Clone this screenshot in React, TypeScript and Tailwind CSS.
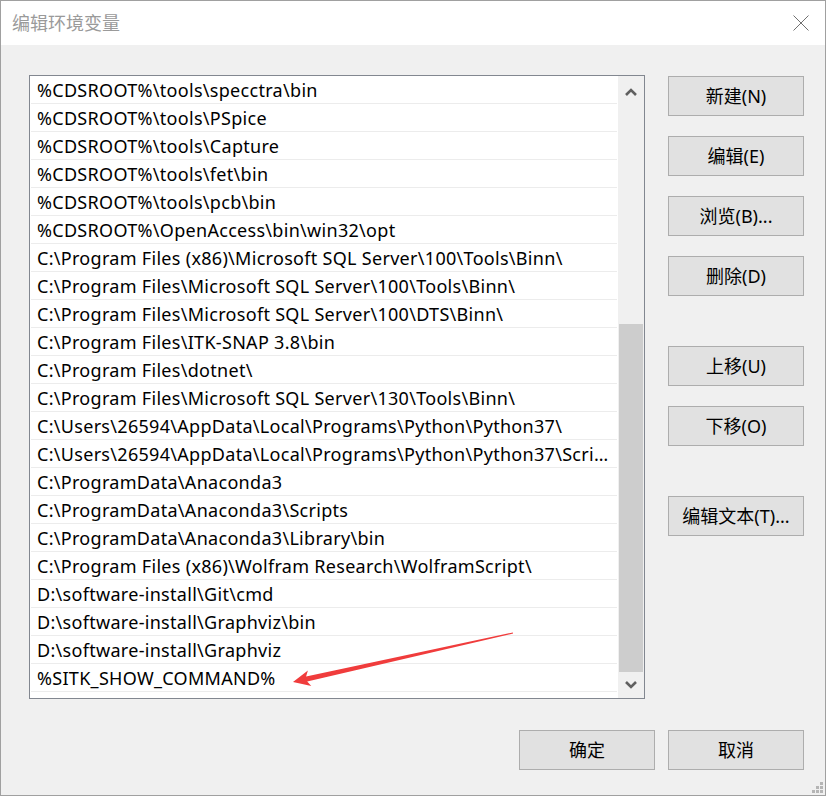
import React from "react";

const rows = [
  "%CDSROOT%\\tools\\specctra\\bin",
  "%CDSROOT%\\tools\\PSpice",
  "%CDSROOT%\\tools\\Capture",
  "%CDSROOT%\\tools\\fet\\bin",
  "%CDSROOT%\\tools\\pcb\\bin",
  "%CDSROOT%\\OpenAccess\\bin\\win32\\opt",
  "C:\\Program Files (x86)\\Microsoft SQL Server\\100\\Tools\\Binn\\",
  "C:\\Program Files\\Microsoft SQL Server\\100\\Tools\\Binn\\",
  "C:\\Program Files\\Microsoft SQL Server\\100\\DTS\\Binn\\",
  "C:\\Program Files\\ITK-SNAP 3.8\\bin",
  "C:\\Program Files\\dotnet\\",
  "C:\\Program Files\\Microsoft SQL Server\\130\\Tools\\Binn\\",
  "C:\\Users\\26594\\AppData\\Local\\Programs\\Python\\Python37\\",
  "C:\\Users\\26594\\AppData\\Local\\Programs\\Python\\Python37\\Scripts\\",
  "C:\\ProgramData\\Anaconda3",
  "C:\\ProgramData\\Anaconda3\\Scripts",
  "C:\\ProgramData\\Anaconda3\\Library\\bin",
  "C:\\Program Files (x86)\\Wolfram Research\\WolframScript\\",
  "D:\\software-install\\Git\\cmd",
  "D:\\software-install\\Graphviz\\bin",
  "D:\\software-install\\Graphviz",
  "%SITK_SHOW_COMMAND%",
];

function Btn({ label }: { label: string }) {
  return (
    <div className="w-[136px] h-[40px] border border-[#adadad] bg-[#e1e1e1] flex items-center justify-center text-[18px] leading-[24px] text-black">
      {label}
    </div>
  );
}

export default function App() {
  return (
    <div className="relative w-[826px] h-[796px] bg-white font-['Noto_Sans','Noto_Sans_CJK_SC',sans-serif]">
      <div className="w-[826px] h-[796px] border border-[#a0a0a0] flex flex-col">
        {/* title bar */}
        <div className="h-[44px] bg-white flex items-center justify-between pl-[11px] pr-[16px]">
          <span className="text-[18px] text-[#9a9a9a] leading-[24px]">编辑环境变量</span>
          <svg width="16" height="16" viewBox="0 0 16 16" className="mb-[1px]">
            <path d="M0.5 0.5 L15.5 15.5 M15.5 0.5 L0.5 15.5" stroke="#707070" strokeWidth="1" fill="none" />
          </svg>
        </div>
        {/* client */}
        <div className="flex-1 bg-[#f0f0f0] flex flex-col pl-[28px] pt-[30px]">
          <div className="flex">
            {/* list box */}
            <div className="w-[616px] h-[624px] border border-[#828790] bg-white flex">
              <div className="flex-1 min-w-0 flex flex-col px-[1px]">
                {rows.map((r, i) => (
                  <div
                    key={i}
                    className="h-[28px] shrink-0 border-b border-[#ececec] pl-[6px] pr-[3px] text-[18px] tracking-[0.3px] text-black"
                  >
                    <div className="truncate w-full leading-[27px] pt-[1px]">{r}</div>
                  </div>
                ))}
              </div>
              {/* scrollbar */}
              <div className="w-[26px] bg-[#f0f0f0] flex flex-col">
                <div className="h-[26px] flex items-center justify-center pt-[6px]">
                  <svg width="12" height="8" viewBox="0 0 12 8">
                    <path d="M1 7 L6 2 L11 7" stroke="#606060" strokeWidth="2.6" fill="none" />
                  </svg>
                </div>
                <div className="flex-1 flex flex-col justify-end">
                  <div className="h-[348px] bg-[#cdcdcd] mx-[1px]" />
                </div>
                <div className="h-[26px] flex items-center justify-center pb-[1px]">
                  <svg width="12" height="8" viewBox="0 0 12 8">
                    <path d="M1 1 L6 6 L11 1" stroke="#606060" strokeWidth="2.6" fill="none" />
                  </svg>
                </div>
              </div>
            </div>
            {/* right buttons */}
            <div className="ml-[23px] pt-[1px] flex flex-col">
              <div className="flex flex-col gap-[20px]">
                <Btn label="新建(N)" />
                <Btn label="编辑(E)" />
                <Btn label="浏览(B)..." />
                <Btn label="删除(D)" />
              </div>
              <div className="flex flex-col gap-[20px] mt-[50px]">
                <Btn label="上移(U)" />
                <Btn label="下移(O)" />
              </div>
              <div className="mt-[50px]">
                <Btn label="编辑文本(T)..." />
              </div>
            </div>
          </div>
          {/* bottom buttons */}
          <div className="flex justify-end gap-[13px] mt-[31px] pr-[21px]">
            <Btn label="确定" />
            <Btn label="取消" />
          </div>
        </div>
      </div>
      {/* size grip */}
      <svg className="absolute left-[812px] top-[782px]" width="12" height="12" viewBox="0 0 12 12">
        <g fill="#b5b5b5">
          <rect x="8" y="0" width="3" height="3" />
          <rect x="4" y="4" width="3" height="3" />
          <rect x="8" y="4" width="3" height="3" />
          <rect x="0" y="8" width="3" height="3" />
          <rect x="4" y="8" width="3" height="3" />
          <rect x="8" y="8" width="3" height="3" />
        </g>
      </svg>
      {/* red annotation arrow */}
      <svg className="absolute left-0 top-0 pointer-events-none" width="826" height="796" viewBox="0 0 826 796">
        <polygon
          points="293,682 307.9,670.5 306.1,676.5 512.9,632.4 513.1,633.6 307.2,681.4 311.3,686.1"
          fill="#f03c3c"
        />
      </svg>
    </div>
  );
}
